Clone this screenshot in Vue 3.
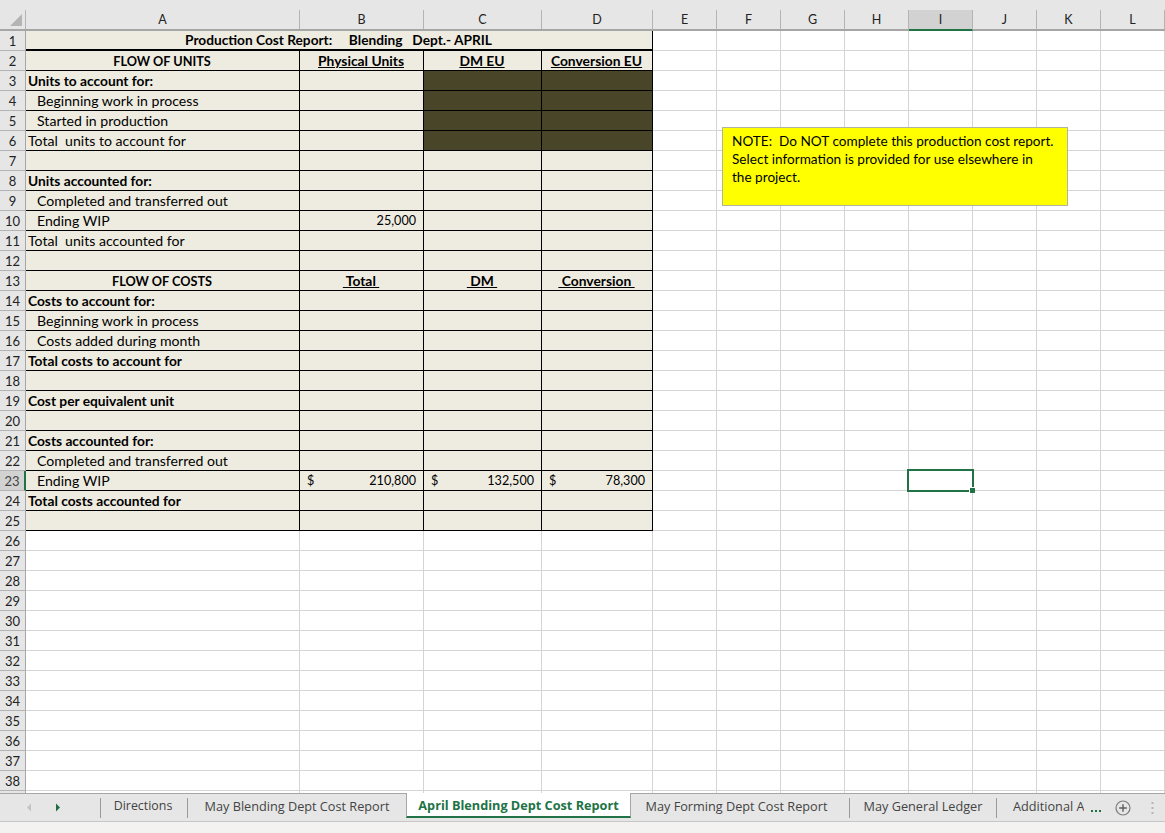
<script setup>
const columns = [
  { name: 'A' }, { name: 'B' }, { name: 'C' }, { name: 'D' }, { name: 'E' }, { name: 'F' },
  { name: 'G' }, { name: 'H' }, { name: 'I', active: true }, { name: 'J' }, { name: 'K' }, { name: 'L' },
]

const blankCols = ['E', 'F', 'G', 'H', 'I', 'J', 'K', 'L']

// report rows 2-25, row 1 is the merged title
const report = [
  { n: 2, a: 'FLOW OF UNITS', type: 'head', vals: ['Physical Units', 'DM EU', 'Conversion EU'], under: true },
  { n: 3, a: 'Units to account for:', type: 'bold', dark: true },
  { n: 4, a: 'Beginning work in process', type: 'indent', dark: true },
  { n: 5, a: 'Started in production', type: 'indent', dark: true },
  { n: 6, a: 'Total  units to account for', dark: true },
  { n: 7 },
  { n: 8, a: 'Units accounted for:', type: 'bold' },
  { n: 9, a: 'Completed and transferred out', type: 'indent' },
  { n: 10, a: 'Ending WIP', type: 'indent', vals: ['25,000'], right: true },
  { n: 11, a: 'Total  units accounted for' },
  { n: 12 },
  { n: 13, a: 'FLOW OF COSTS', type: 'head', vals: [' Total ', ' DM ', ' Conversion '], under: true },
  { n: 14, a: 'Costs to account for:', type: 'bold' },
  { n: 15, a: 'Beginning work in process', type: 'indent' },
  { n: 16, a: 'Costs added during month', type: 'indent' },
  { n: 17, a: 'Total costs to account for', type: 'bold' },
  { n: 18 },
  { n: 19, a: 'Cost per equivalent unit', type: 'bold' },
  { n: 20 },
  { n: 21, a: 'Costs accounted for:', type: 'bold' },
  { n: 22, a: 'Completed and transferred out', type: 'indent' },
  { n: 23, a: 'Ending WIP', type: 'indent', money: ['210,800', '132,500', '78,300'], active: true },
  { n: 24, a: 'Total costs accounted for', type: 'bold' },
  { n: 25 },
]

const emptyRows = []
for (let i = 26; i <= 38; i++) emptyRows.push(i)

const tabs = [
  { name: 'Directions', cls: 'tab-directions' },
  { name: 'May Blending Dept Cost Report', cls: 'tab-blending' },
  { name: 'April Blending Dept Cost Report', cls: 'tab-active' },
  { name: 'May Forming Dept Cost Report', cls: 'tab-forming' },
  { name: 'May General Ledger', cls: 'tab-ledger' },
]
</script>

<template>
  <div class="app">
    <div class="sheet">
      <div class="row col-head">
        <div class="corner"><span class="corner-mark"></span></div>
        <div v-for="c in columns" :key="c.name" class="col-label" :class="{ 'col-active': c.active }">{{ c.name }}</div>
      </div>

      <div class="row">
        <div class="row-label">1</div>
        <div class="cell report title">Production Cost Report:&nbsp;&nbsp;&nbsp;&nbsp; Blending&nbsp;&nbsp; Dept.- APRIL</div>
        <div v-for="c in blankCols" :key="c" class="cell"></div>
      </div>

      <div v-for="r in report" :key="r.n" class="row">
        <div class="row-label" :class="{ 'row-active': r.active }">{{ r.n }}</div>
        <div class="cell report" :class="r.type">{{ r.a }}</div>
        <template v-for="i in [0, 1, 2]" :key="i">
          <div class="cell report num" :class="{ dark: r.dark && i > 0, under: r.under, right: r.right, money: r.money }">
            <template v-if="r.money"><span>$</span><span>{{ r.money[i] }}</span></template>
            <span v-else-if="r.vals">{{ r.vals[i] }}</span>
          </div>
        </template>
        <div v-for="c in blankCols" :key="c" class="cell"></div>
      </div>

      <div v-for="n in emptyRows" :key="n" class="row">
        <div class="row-label">{{ n }}</div>
        <div class="cell"></div>
        <div class="cell"></div>
        <div class="cell"></div>
        <div class="cell"></div>
        <div v-for="c in blankCols" :key="c" class="cell"></div>
      </div>

      <!-- row 39 only peeks out above the tab bar, its number is hidden -->
      <div class="row">
        <div class="row-label"></div>
        <div class="cell"></div>
        <div class="cell"></div>
        <div class="cell"></div>
        <div class="cell"></div>
        <div v-for="c in blankCols" :key="c" class="cell"></div>
      </div>

      <div class="note">
        NOTE:&nbsp; Do NOT complete this production cost report.<br />
        Select information is provided for use elsewhere in<br />
        the project.
      </div>
      <div class="selection"><span class="handle"></span></div>
    </div>

    <div class="tabbar">
      <div class="nav">
        <svg width="6" height="9" viewBox="0 0 6 9"><path d="M5 0.5 L1 4.5 L5 8.5 Z" fill="#c4c4c4" /></svg>
        <svg width="6" height="9" viewBox="0 0 6 9"><path d="M1 0.5 L5 4.5 L1 8.5 Z" fill="#1f6e43" /></svg>
      </div>
      <div v-for="t in tabs" :key="t.name" class="tab" :class="t.cls">{{ t.name }}</div>
      <div class="tab tab-more"><span class="clipped">Additional A</span></div>
      <div class="more-dots">
        <span></span><span></span><span></span>
      </div>
      <svg class="add" width="16" height="16" viewBox="0 0 16 16">
        <circle cx="8" cy="8" r="7" fill="none" stroke="#7b7b7b" stroke-width="1.2" />
        <path d="M8 4.2 V11.8 M4.2 8 H11.8" stroke="#5f5f5f" stroke-width="1.4" />
      </svg>
      <svg class="kebab" width="3" height="12" viewBox="0 0 3 12">
        <rect x="0.5" y="0" width="2" height="2" fill="#b5b5b5" />
        <rect x="0.5" y="5" width="2" height="2" fill="#b5b5b5" />
        <rect x="0.5" y="10" width="2" height="2" fill="#b5b5b5" />
      </svg>
    </div>
    <div class="statusbar"></div>
  </div>
</template>

<style>
html, body {
  margin: 0;
  background: #fff;
}
</style>

<style scoped>
.app {
  width: 1165px;
  height: 833px;
  display: flex;
  flex-direction: column;
  overflow: hidden;
  font-family: Lato, "Liberation Sans", sans-serif;
  font-size: 14.1px;
  color: #000;
}

.sheet {
  position: relative;
  height: 793px;
  overflow: hidden;
  flex: none;
}

.row {
  display: grid;
  grid-template-columns: 26px 274px 124px 118px 111px repeat(8, 64px);
  grid-template-rows: 20px;
  height: 20px;
}

.col-head {
  height: 31px;
  grid-template-rows: 19px;
  background: #e6e6e6;
  box-sizing: border-box;
  padding-top: 10px;
  border-bottom: 2px solid #a6a6a6;
}

.corner {
  position: relative;
  border-right: 1px solid #b4b4b4;
}

.corner-mark {
  position: absolute;
  left: 10px;
  top: 4px;
  width: 0;
  height: 0;
  border-left: 12px solid transparent;
  border-bottom: 12px solid #b4b4b4;
}

.col-label {
  border-right: 1px solid #b4b4b4;
  text-align: center;
  font-size: 12.5px;
  line-height: 19px;
  color: #222;
  height: 19px;
}

.col-active {
  background: #d2d2d2;
  height: 21px;
  border-bottom: 2px solid #217346;
  box-sizing: border-box;
}

.row-label {
  background: #e6e6e6;
  border-right: 1px solid #a6a6a6;
  border-bottom: 1px solid #b4b4b4;
  text-align: center;
  font-size: 13px;
  line-height: 20px;
  color: #222;
  box-sizing: border-box;
}

.row-active {
  background: #d2d2d2;
  color: #444;
  border-right: 2px solid #217346;
}

.cell {
  height: 20px;
  border-right: 1px solid #d4d4d4;
  border-bottom: 1px solid #d4d4d4;
  box-sizing: border-box;
  line-height: 20px;
  white-space: pre;
  padding: 0 3px 0 2px;
  overflow: hidden;
}

.report {
  background: #eeece1;
  border-right-color: #000;
  border-bottom-color: #000;
}

.title {
  grid-column: 2 / 6;
  text-align: center;
  font-weight: 700;
  font-size: 13.7px;
  line-height: 18px;
  border-bottom-width: 2px;
}

.head {
  text-align: center;
  font-weight: 700;
  font-size: 12.7px;
}

.bold {
  font-weight: 700;
  font-size: 13.75px;
}

.indent {
  padding-left: 11px;
}

.num {
  text-align: center;
}

.dark {
  background: #494529;
}

.under {
  font-weight: 700;
  font-size: 13.85px;
  text-decoration: underline;
}

.right {
  text-align: right;
  padding-right: 7px;
  font-size: 12.6px;
}

.money {
  display: flex;
  justify-content: space-between;
  padding: 0 7px;
  font-size: 12.6px;
}

.note {
  position: absolute;
  left: 722px;
  top: 127px;
  width: 346px;
  height: 79px;
  box-sizing: border-box;
  background: #ff0;
  border: 1px solid #b2b2a0;
  padding: 4px 9px;
  line-height: 18px;
  font-size: 13.6px;
}

.selection {
  position: absolute;
  left: 907px;
  top: 469px;
  width: 67px;
  height: 23px;
  box-sizing: border-box;
  border: 2px solid #217346;
}

.handle {
  position: absolute;
  right: -3px;
  bottom: -3px;
  width: 5px;
  height: 5px;
  background: #217346;
  border: 1px solid #fff;
  border-width: 1px 0 0 1px;
}

.tabbar {
  display: flex;
  align-items: center;
  height: 29px;
  flex: none;
  box-sizing: border-box;
  background: #e6e6e6;
  border-top: 1px solid #a6a6a6;
  border-bottom: 1px solid #c6c6c6;
  font-family: "Open Sans", "Liberation Sans", sans-serif;
  font-size: 12.7px;
  color: #444;
}

.nav {
  width: 100px;
  display: flex;
  gap: 23px;
  padding-left: 26px;
  box-sizing: border-box;
}

.tab {
  height: 20px;
  line-height: 16px;
  text-align: center;
  box-sizing: border-box;
  border-left: 1px solid #9a9a9a;
  white-space: nowrap;
}

.tab-directions { width: 87px; font-size: 12.4px; padding-right: 2px; }
.tab-blending { width: 219px; }

.tab-active {
  align-self: flex-start;
  width: 225px;
  height: 25px;
  line-height: 25px;
  background: #fff;
  border-left: 1px solid #a6a6a6;
  border-right: 1px solid #a6a6a6;
  border-bottom: 2px solid #217346;
  color: #217346;
  font-weight: 700;
  margin-top: -1px;
}

.tab-forming { width: 218px; border-left: none; padding-right: 7px; }
.tab-ledger { width: 147px; }

.tab-more {
  width: 95px;
  text-align: left;
  padding-left: 16px;
}

.clipped {
  display: block;
  width: 71px;
  overflow: hidden;
}

.more-dots {
  width: 20px;
  display: flex;
  gap: 2px;
  margin-top: 6px;
}

.more-dots span {
  width: 2px;
  height: 2px;
  background: #217346;
}

.add {
  margin-left: 4px;
}

.kebab {
  margin-left: 20px;
}

.statusbar {
  flex: 1;
  background: #f3f2f1;
}
</style>
